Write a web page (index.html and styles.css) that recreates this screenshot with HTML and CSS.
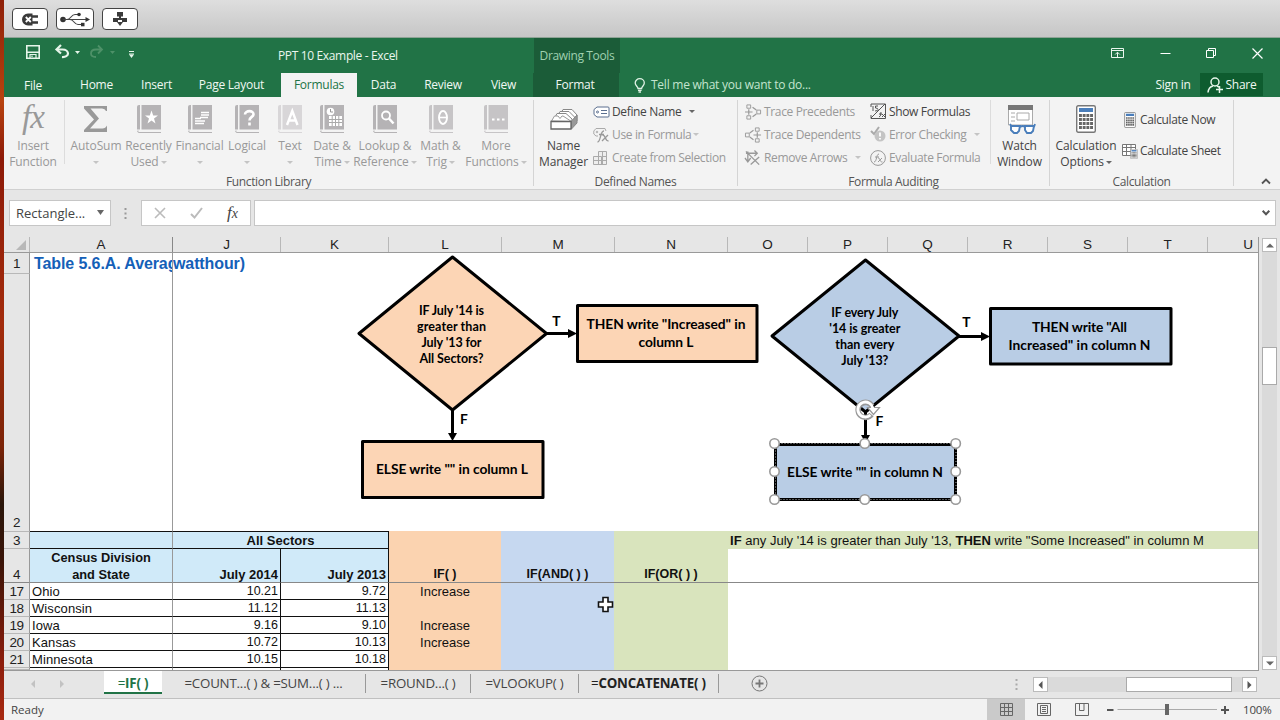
FILE: index.html
```html
<!DOCTYPE html>
<html lang="en">
<head>
<meta charset="utf-8">
<title>PPT 10 Example - Excel</title>
<link rel="stylesheet" href="styles.css">
</head>
<body>
<svg class="defs" width="0" height="0">
  <symbol id="book" viewBox="0 0 24 28"><path d="M0 2Q0 0 2 0H3V24.500H0Z" fill="currentColor"/><path d="M4.500 0H24V24.500H4.500Z" fill="currentColor"/><path d="M1 25.500Q0 27.500 2 27.500H24" fill="none" stroke="currentColor"/></symbol>
  <symbol id="calc" viewBox="0 0 20 28"><rect x=".7" y=".7" width="18.600" height="26.600" rx="1.500" fill="#fff" stroke="#777" stroke-width="1.400"/><rect x="3" y="3" width="14" height="4" fill="#4a7ebb"/><path d="M3 10.500h14M3 14.500h14M3 18.500h14M3 22.500h14" stroke="#666" stroke-width="3" stroke-dasharray="2.900 .8"/></symbol>
</svg>
<div class="desktop">
<div class="wallpaper"></div>
<div class="screen">

<div class="devices">
  <span class="device"><svg width="16" height="13" viewBox="0 0 16 13"><path d="M10.500 .5V12.500H6A6 6 0 0 1 6 .5Z" fill="#3a3a3a"/><path d="M10 3.500H16M10 9.500H16" stroke="#3a3a3a" stroke-width="2.400"/><path d="M3.800 4L8.800 9M8.800 4L3.800 9" stroke="#fff" stroke-width="1.800"/></svg></span>
  <span class="device"><svg width="30" height="15" viewBox="0 0 30 15"><circle cx="3" cy="7.500" r="2.800" fill="#333"/><path d="M3 7.500H26M7 7.500C11 7.500 11 2.500 15 2.500H18M10 7.500C14 7.500 14 12.500 18 12.500H22" fill="none" stroke="#444" stroke-width="1.200"/><path d="M25.500 5L30 7.500L25.500 10Z" fill="#333"/><circle cx="19" cy="2.500" r="1.800" fill="#333"/><rect x="21" y="10.800" width="3.500" height="3.500" fill="#333"/></svg></span>
  <span class="device"><svg width="16" height="14" viewBox="0 0 16 14"><path d="M5 0H11V4.500H9V6H15V10H10V8H6V10H1V6H7V4.500H5ZM5 10H11L8 14Z" fill="#3a3a3a"/></svg></span>
</div>

<div class="titlebar">
  <div class="quick">
    <svg width="120" height="22" viewBox="0 0 120 22" fill="none" stroke="#e6f5ea">
      <path d="M.8 3.800H13.200V16.200H.8ZM1 10.200H13" stroke-width="1.600"/><path d="M4 16V12.500H10V16M6 13.500V15" stroke-width="1.200"/>
      <path d="M31 7.500H36.500C40 7.500 42 9.500 42 11.500S39.500 15.300 36 15" stroke-width="2.200"/><path d="M35 3L30.500 7.500L35 11.500" stroke-width="2.200"/><path d="M49 9H54L51.500 12Z" fill="#e6f5ea" stroke="none"/>
      <g stroke="#4e9168"><path d="M75 7.500H70C66.500 7.500 65 9.500 65 11.500S67 15 70 15M72 3.500L76 7.500L72 11.500" stroke-width="1.800"/></g><path d="M84 9H89L86.500 12Z" fill="#4e9168" stroke="none"/>
      <path d="M103 9.500H108M103 12H108" stroke-width="1"/><path d="M103 12.500H108L105.500 16Z" fill="#e6f5ea" stroke="none"/>
    </svg>
  </div>
  <div class="wintitle">PPT 10 Example - Excel</div>
  <div class="ctx-title">Drawing Tools</div>
  <div class="winctl">
    <svg width="14" height="12" viewBox="0 0 14 12" fill="none" stroke="#eaf6ee"><path d="M.5 1.500H12.500V10.500H.5ZM.5 3.500H12.500M6.500 10V5.500M4.200 7.500L6.500 5.200L8.800 7.500"/></svg>
    <svg width="11" height="12" viewBox="0 0 11 12" stroke="#fff"><path d="M.5 6.500H10.500"/></svg>
    <svg width="11" height="11" viewBox="0 0 11 11" fill="none" stroke="#fff"><path d="M.5 2.500H7.500V9.500H.5ZM2.500 2.500V.5H9.500V7.500H7.500"/></svg>
    <svg width="11" height="11" viewBox="0 0 11 11" stroke="#fff" stroke-width="1.200"><path d="M.5.5L10.500 10.500M10.500.5L.5 10.500"/></svg>
  </div>
</div>

<div class="tabs">
  <span class="t-file">File</span><span class="t-home">Home</span><span class="t-insert">Insert</span><span class="t-page">Page Layout</span><span class="t-form active">Formulas</span><span class="t-data">Data</span><span class="t-rev">Review</span><span class="t-view">View</span><span class="t-fmt">Format</span>
  <span class="tell"><svg width="12" height="15" viewBox="0 0 12 15" fill="none" stroke="#e0f2e5" stroke-width="1.300"><path d="M4 10.500C4 8.500 1.200 7.800 1.200 5A4.500 4.300 0 0 1 10.300 5C10.300 7.800 7.600 8.500 7.600 10.500ZM4 12.300H7.600M4.500 14H7"/></svg>Tell me what you want to do...</span>
  <span class="signin">Sign in</span>
  <span class="share"><svg width="17" height="16" viewBox="0 0 17 16" fill="none" stroke="#e6f5ea" stroke-width="1.500"><circle cx="8" cy="5" r="4"/><path d="M1 15.500C1.500 11.500 3.500 9.500 6 9M10 9L12 10M9 12.500H16M12.500 9V16"/></svg>Share</span>
</div>

<div class="ribbon">
  <section class="group g-lib">
    <div class="tools">
      <div class="big off w58"><span class="pic fx">fx</span><span>Insert</span><span>Function</span></div>
      <i class="vline first"></i>
      <div class="big off w56"><span class="pic"><svg width="24" height="28" viewBox="0 0 24 28"><path d="M0 1H23V6H22Q21 3.500 18 3.500H6.500L15 13.500L6 23.500H18.500Q21.500 23.500 23 20.500V27H0V25L10 14.500L0 3.500Z" fill="#999"/></svg></span><span>AutoSum</span><span class="arr"></span></div>
      <div class="big off w49"><span class="pic"><svg width="24" height="28"><use href="#book"/><path d="M14.500 5.500L16.200 10.500H21L17 13.600L18.500 18.500L14.500 15.500L10.500 18.500L12 13.600L8 10.500H12.800Z" fill="#fff"/></svg></span><span>Recently</span><span>Used <i class="arr in"></i></span></div>
      <div class="big off w53"><span class="pic"><svg width="24" height="28"><use href="#book"/><path d="M13 7.500H21M13 10H21M12 12.500H20M7 13.500H13M7 16H17M7 18.500H16" stroke="#fff" stroke-width="1.600"/></svg></span><span>Financial</span><span class="arr"></span></div>
      <div class="big off w42"><span class="pic"><svg width="24" height="28"><use href="#book"/><path d="M10 9.500C10 5 19 5 18.500 9.500C18.200 12 14.500 12 14.500 15.500M14.500 17.500V20.500" fill="none" stroke="#fff" stroke-width="2.600"/></svg></span><span>Logical</span><span class="arr"></span></div>
      <div class="big off w44"><span class="pic pale"><svg width="24" height="28"><use href="#book"/><path d="M9 20L14.300 6L19.500 20M11 15.500H17.500" fill="none" stroke="#fff" stroke-width="2.400"/></svg></span><span>Text</span><span class="arr"></span></div>
      <div class="big off w40"><span class="pic"><svg width="24" height="28"><use href="#book"/><circle cx="10.500" cy="6.500" r="3.800" fill="#fff"/><path d="M10.500 4V7H13" stroke="#999" fill="none"/><path d="M9 11H22V21H9Z" fill="#fff"/><path d="M9 14.500H22M9 17.500H22M12.200 11V21M15.500 11V21M18.800 11V21" stroke="#aaa"/></svg></span><span>Date &amp;</span><span>Time <i class="arr in"></i></span></div>
      <div class="big off w66"><span class="pic"><svg width="24" height="28"><use href="#book"/><circle cx="13" cy="10.500" r="4" fill="none" stroke="#fff" stroke-width="1.800"/><path d="M16 13.500L20.500 18.500" stroke="#fff" stroke-width="2.500"/></svg></span><span>Lookup &amp;</span><span>Reference <i class="arr in"></i></span></div>
      <div class="big off w45"><span class="pic mid"><svg width="24" height="28"><use href="#book"/><ellipse cx="14" cy="12.500" rx="4" ry="6.500" fill="none" stroke="#fff" stroke-width="1.900"/><path d="M11 12.500H17" stroke="#fff" stroke-width="1.600"/></svg></span><span>Math &amp;</span><span>Trig <i class="arr in"></i></span></div>
      <div class="big off w66"><span class="pic mid"><svg width="24" height="28"><use href="#book"/><path d="M8 14.500H21" stroke="#fff" stroke-width="2.200" stroke-dasharray="2.500 2.500"/></svg></span><span>More</span><span>Functions <i class="arr in"></i></span></div>
    </div>
    <div class="cap">Function Library</div>
  </section>

  <section class="group g-names">
    <div class="tools">
      <div class="big w59"><span class="pic"><svg width="28" height="28" viewBox="0 0 28 28" fill="#fff" stroke="#888"><path d="M9 12L13 4.500H22L27 10V16L22 20Z"/><path d="M6 13L10 6.500H19L24.500 12V18L21 20Z"/><path d="M3 16L7 8.500H16L22 14V20Z"/><path d="M1.500 16L4.500 11H8L10 13.500L12 11H13L21.500 16.500Z" stroke="#999"/><path d="M21.500 16L27 10V18L21.500 24Z" fill="#999"/><path d="M1 16.500H21V24H1Z" stroke="#666" stroke-width="1.300"/></svg></span><span>Name</span><span>Manager</span></div>
      <div class="small">
        <div class="row"><svg width="17" height="16" viewBox="0 0 17 16" fill="#fff" stroke="#5b6f8f"><path d="M4 3H15Q16 3 16 4V12Q16 13 15 13H4L1 10.500V5.500Z"/><circle cx="4.500" cy="8" r="1"/><path d="M8 6.500H14M8 9.500H14"/></svg><span>Define Name</span><i class="arr dk gap"></i></div>
        <div class="row off"><svg width="17" height="16" viewBox="0 0 17 16" fill="none" stroke="#aaa"><path d="M9 1.500H12L13 4M9 1.500H3L.8 4V7L3 9H5"/><circle cx="4" cy="5" r=".8"/><path d="M4.500 15C8 15 7 3.500 11 4M6 7.500H11M9.500 8C13 8 11.500 14 15.500 14M15 8L9 14" stroke="#999" stroke-width="1.300"/></svg><span>Use in Formula</span><i class="arr"></i></div>
        <div class="row off"><svg width="17" height="16" viewBox="0 0 17 16" fill="#eee" stroke="#aaa"><path d="M5.500 1.500H13.500V14.500H5.500ZM.5 6.500H8.500V14.500H.5Z"/><path d="M.5 10.500H13.500M9.500 1.500V14.500M9.500 6.500H13.500"/></svg><span>Create from Selection</span></div>
      </div>
    </div>
    <div class="cap">Defined Names</div>
  </section>

  <section class="group g-audit">
    <div class="tools">
      <div class="small c1">
        <div class="row off"><svg width="17" height="16" viewBox="0 0 18 16" fill="none" stroke="#999"><path d="M2 .5H6V4H2ZM2 12H6V15.500H2ZM12.500 6H16.500V10H12.500Z"/><path d="M0 8H8M4 5V11M8 3L12 6M8 13L12 10" stroke-width="1.300"/></svg><span>Trace Precedents</span></div>
        <div class="row off"><svg width="17" height="16" viewBox="0 0 18 16" fill="none" stroke="#999"><path d="M11 .5H15V4H11ZM11 12H15V15.500H11ZM.5 6H4.500V10H.5Z"/><path d="M9 8H17M13 5V11M5 6L9 3M5 10L9 13" stroke-width="1.300"/></svg><span>Trace Dependents</span></div>
        <div class="row off"><svg width="17" height="16" viewBox="0 0 18 16" fill="none" stroke="#999" stroke-width="1.400"><path d="M1 1L15 15M3 1V11M1 3H13M0 8L3 12L6 8M10 0L13 3L10 6M15 7L6 15"/></svg><span>Remove Arrows</span><i class="arr gap7"></i></div>
      </div>
      <div class="small c2">
        <div class="row"><svg width="17" height="17" viewBox="0 0 17 17" fill="none" stroke="#555"><path d="M1 4V1H15.500V15.500H1V12M15 1L1 15"/><path d="M3 3V8M8 3H5.500V5Q8 5 8 6.500T5 8M9 14Q11 14 11 9M9 11H12M12 11L15 14M15 11L12 14"/></svg><span>Show Formulas</span></div>
        <div class="row off"><svg width="17" height="16" viewBox="0 0 17 16" fill="none"><path d="M1 4L4 7L9 0" stroke="#aaa" stroke-width="2"/><circle cx="10" cy="9" r="5.500" fill="#c4c4c4"/><path d="M10 5.500V9.500M10 11V12.500" stroke="#fff" stroke-width="1.800"/></svg><span>Error Checking</span><i class="arr gap7"></i></div>
        <div class="row off"><svg width="17" height="16" viewBox="0 0 17 16" fill="none" stroke="#999"><circle cx="8" cy="8" r="7.400"/><path d="M4 12C7 12 6 4 9 4M5 7H9M8 8C11 8 9 12 12.500 12M12 8L8 12"/></svg><span>Evaluate Formula</span></div>
      </div>
      <i class="vline"></i>
      <div class="big w57"><span class="pic"><svg width="30" height="30" viewBox="0 0 30 30" fill="none"><path d="M3.500 2H27.500V20H3.500Z" fill="#fff" stroke="#aaa"/><path d="M3 0H28V5H3Z" fill="#777"/><path d="M12 8H24V15H12ZM6 8H10M6 12H10M6 16H10" stroke="#aaa"/><path d="M5 19L7 22M30 19L29 22M15 22Q18 20 20 22" stroke="#4a7ebb" stroke-width="1.800"/><path d="M6 21H15L14 26L12 28H9L6 25ZM20 21H29L28 26L26 28H22L20 25Z" fill="#fff" stroke="#4a7ebb" stroke-width="1.900"/></svg></span><span>Watch</span><span>Window</span></div>
    </div>
    <div class="cap">Formula Auditing</div>
  </section>

  <section class="group g-calc">
    <div class="tools">
      <div class="big w72"><span class="pic"><svg width="20" height="28"><use href="#calc"/></svg></span><span>Calculation</span><span>Options <i class="arr in dk"></i></span></div>
      <div class="small two">
        <div class="row"><svg width="16" height="16" viewBox="0 0 16 16"><use href="#calc" x="1" y="0" width="14" height="16"/></svg><span>Calculate Now</span></div>
        <div class="row"><svg width="16" height="16" viewBox="0 0 16 16"><path d="M.5 1.500H13.500V12.500H.5ZM.5 4.500H13.500M.5 8.500H13.500M4.500 1.500V12.500M9 1.500V12.500" fill="#fff" stroke="#777"/><use href="#calc" x="8" y="6" width="8" height="10"/></svg><span>Calculate Sheet</span></div>
      </div>
    </div>
    <div class="cap">Calculation</div>
  </section>
  <div class="collapse"><svg width="10" height="7" viewBox="0 0 10 7" fill="none" stroke="#555" stroke-width="1.800"><path d="M1 5.500L5 1.500L9 5.500"/></svg></div>
</div>

<div class="fbar">
  <div class="namebox"><span>Rectangle...</span><svg width="9" height="6"><path d="M1 0H8L4.500 5Z" fill="#666"/></svg></div>
  <svg class="dots" width="3" height="14"><path d="M1.500 2V14" stroke="#999" stroke-width="2" stroke-dasharray="2 2.500"/></svg>
  <div class="fbtns">
    <svg width="12" height="12" viewBox="0 0 12 12" fill="none" stroke="#bbb" stroke-width="1.600"><path d="M1 1L11 11M11 1L1 11"/></svg>
    <svg width="13" height="12" viewBox="0 0 13 12" fill="none" stroke="#bbb" stroke-width="2"><path d="M1 7L4.500 10.500L12 1"/></svg>
    <span class="fx2">f<small>x</small></span>
  </div>
  <div class="finput"><svg width="8" height="6" viewBox="0 0 8 6" fill="none" stroke="#555" stroke-width="2"><path d="M.7.8L4 4.300L7.300.8"/></svg></div>
</div>

<div class="work">
  <div class="sheet">
    <div class="heads"><span class="corner"><svg width="10" height="10"><path d="M10 0V10H0Z" fill="#b8b8b8"/></svg></span><span class="cA">A</span><span class="cJ">J</span><span class="cJ">K</span><span class="cL">L</span><span class="cM">M</span><span class="cN">N</span><span class="cO">O</span><span class="cO">P</span><span class="cO">Q</span><span class="cO">R</span><span class="cO">S</span><span class="cO">T</span><span class="cU">U</span></div>
    <div class="r r1"><b class="rh">1</b><span class="cA">Table 5.6.A. Averag</span><span class="rest">watthour)</span></div>
    <div class="r r2"><b class="rh">2</b><span class="cA"></span><span class="cJK"></span><span class="cL"></span><span class="cM"></span><span class="cN"></span><span class="rest"></span></div>
    <div class="r r3"><b class="rh">3</b><span class="cA"></span><span class="cJK">All Sectors</span><span class="cL"></span><span class="cM"></span><span class="cN"></span><span class="rest"><b>IF</b> any July '14 is greater than July '13, <b>THEN</b> write "Some Increased" in column M</span></div>
    <div class="r r4"><b class="rh">4</b><span class="cA">Census Division<br>and State</span><span class="cJ">July 2014</span><span class="cJ">July 2013</span><span class="cL">IF( )</span><span class="cM">IF(AND( ) )</span><span class="cN">IF(OR( ) )</span><span class="rest"></span></div>
    <div class="r d"><b class="rh">17</b><span class="cA">Ohio</span><span class="cJ">10.21</span><span class="cJ">9.72</span><span class="cL">Increase</span><span class="cM"></span><span class="cN"></span></div>
    <div class="r d"><b class="rh">18</b><span class="cA">Wisconsin</span><span class="cJ">11.12</span><span class="cJ">11.13</span><span class="cL"></span><span class="cM"></span><span class="cN"></span></div>
    <div class="r d"><b class="rh">19</b><span class="cA">Iowa</span><span class="cJ">9.16</span><span class="cJ">9.10</span><span class="cL">Increase</span><span class="cM"></span><span class="cN"></span></div>
    <div class="r d"><b class="rh">20</b><span class="cA">Kansas</span><span class="cJ">10.72</span><span class="cJ">10.13</span><span class="cL">Increase</span><span class="cM"></span><span class="cN"></span></div>
    <div class="r d"><b class="rh">21</b><span class="cA">Minnesota</span><span class="cJ">10.15</span><span class="cJ">10.18</span><span class="cL"></span><span class="cM"></span><span class="cN"></span></div>
    <div class="r last"><b class="rh"></b><span class="cA"></span><span class="cJ"></span><span class="cJ"></span><span class="cL"></span><span class="cM"></span><span class="cN"></span></div>

    <svg class="chart" width="860" height="380" viewBox="350 250 860 380">
      <g class="orange">
        <path d="M452.500 257L546.500 333.500L452.500 410L359 333.500Z"/>
        <rect x="577.500" y="305.500" width="179.500" height="56"/>
        <rect x="362.500" y="441.500" width="180.500" height="56"/>
      </g>
      <g class="blue">
        <path d="M865.500 260L959 336L865.500 412L772 336Z"/>
        <rect x="990.500" y="308.500" width="180.500" height="55.500"/>
        <rect x="775.500" y="444.500" width="180" height="55"/>
      </g>
      <path class="wire" d="M546 333.500H570M452.500 410V434M959 336.500H983M865.500 412V436"/>
      <path d="M568 329L577 333.500L568 338ZM448 433H457L452.500 441ZM981 332L990 336.500L981 341ZM861 435H870L865.500 443Z"/>
      <g class="dia">
        <text x="451.500" y="314.500" textLength="65">IF July '14 is</text><text x="451.500" y="330.500" textLength="69">greater than</text><text x="451.500" y="346.500" textLength="60">July '13 for</text><text x="451.500" y="363" textLength="64">All Sectors?</text>
        <text x="864.800" y="316.500" textLength="67">IF every July</text><text x="864.800" y="332.500" textLength="71">'14 is greater</text><text x="864.800" y="348.500" textLength="59">than every</text><text x="864.800" y="365" textLength="47">July '13?</text>
      </g>
      <g class="box">
        <text x="666" y="329" textLength="159">THEN write "Increased" in</text><text x="666" y="347" textLength="55">column L</text>
        <text x="452" y="474" textLength="152">ELSE write "" in column L</text>
        <text x="1079.500" y="332" textLength="95">THEN write "All</text><text x="1079.500" y="350" textLength="142">Increased" in column N</text>
        <text x="865" y="477" textLength="156">ELSE write "" in column N</text>
        <text x="556.500" y="326">T</text><text x="464" y="424">F</text><text x="966.500" y="327">T</text><text x="879.300" y="426">F</text>
      </g>
      <path class="dots-sel" d="M775.500 443.500H956V499.500H775.500Z"/>
      <g class="handles"><circle cx="774.500" cy="443.500" r="4.700"/><circle cx="864.800" cy="443.500" r="4.700"/><circle cx="955.700" cy="443.500" r="4.700"/><circle cx="774.500" cy="471.500" r="4.700"/><circle cx="955.700" cy="471.500" r="4.700"/><circle cx="774.500" cy="499.500" r="4.700"/><circle cx="864.800" cy="499.500" r="4.700"/><circle cx="955.700" cy="499.500" r="4.700"/></g>
      <g fill="none"><path d="M872 406A7.500 7.500 0 1 0 871.500 414.500" stroke="#999" stroke-width="5.500"/><path d="M867.500 407.500H879.500L873.500 414.500Z" fill="#fff" stroke="#999" stroke-width="1.200"/><path d="M872.800 408.500A7.500 7.500 0 1 0 870.500 415" stroke="#fff" stroke-width="2.800"/></g>
      <path d="M603 597.500H608V602H612.500V607H608V611.500H603V607H598.500V602H603Z" fill="#fff" stroke="#111" stroke-width="1.600"/>
    </svg>
  </div>
  <div class="vscroll"><span class="sb"><svg width="8" height="5"><path d="M0 4.500H8L4 .5Z" fill="#666"/></svg></span><span class="vthumb"></span><span class="sb"><svg width="8" height="5"><path d="M0 .5H8L4 4.500Z" fill="#666"/></svg></span></div>
</div>

<div class="stabs">
  <span class="nav"><svg width="60" height="10"><path d="M31 1V9L27 5ZM56 1V9L60 5Z" fill="#c2c2c2" transform="translate(-26 0)"/></svg></span>
  <span class="st1 on">=<b>IF( )</b></span><span class="st2">=COUNT...( ) &amp; =SUM...( ) ...</span><span class="st3">=ROUND...( )</span><span class="st4">=VLOOKUP( )</span><span class="st5">=<b>CONCATENATE( )</b></span>
  <svg class="add" width="17" height="17" fill="none" stroke="#777"><circle cx="8.500" cy="8.500" r="7.500"/><path d="M4.500 8.500H12.500M8.500 4.500V12.500" stroke-width="1.800"/></svg>
  <svg class="dots hd" width="3" height="13"><path d="M1.500 1V13" stroke="#aaa" stroke-width="2" stroke-dasharray="2 2.500"/></svg>
  <span class="hscroll"><span class="sb"><svg width="5" height="8"><path d="M4.500 0V8L.5 4Z" fill="#555"/></svg></span><span class="track"><span class="hthumb"></span></span><span class="sb"><svg width="5" height="8"><path d="M.5 0V8L4.500 4Z" fill="#555"/></svg></span></span>
</div>

<div class="status">
  <span class="ready">Ready</span>
  <span class="vw sel"><svg width="13" height="13" fill="none" stroke="#666"><path d="M.5.5H12.500V12.500H.5ZM.5 4.500H12.500M.5 8.500H12.500M4.500.5V12.500M8.500.5V12.500"/></svg></span>
  <span class="vw"><svg width="14" height="13" fill="none" stroke="#666"><path d="M.5.500H13.500V12.500H.5ZM3.500 2.500H10.500V10.500H3.500ZM5 4.500H9M5 6.500H9M5 8.500H9"/></svg></span>
  <span class="vw"><svg width="14" height="13" fill="none" stroke="#666"><path d="M.5.5H13.500V12.500H.5ZM4.500.5V7.500H9V.5"/></svg></span>
  <svg class="zoom" width="122" height="13" viewBox="0 0 122 13"><path d="M0 7H6.500M114 7H122M118 3V11" stroke="#555" stroke-width="2"/><path d="M10.500 6.500H110" stroke="#aaa"/><rect x="58" y="1" width="4" height="11" fill="#666"/></svg>
  <span class="pct">100%</span>
</div>

</div>
</div>
</body>
</html>
```

FILE: styles.css
```css
* { box-sizing: border-box; }
body { margin: 0; width: 1280px; height: 720px; overflow: hidden; font-family: "Open Sans", sans-serif; font-size: 12px; color: #444; }
svg { display: block; flex: none; overflow: visible; }
.defs { position: absolute; }
.desktop { display: flex; height: 720px; }
.wallpaper { width: 4px; background: linear-gradient(#8e1f08, #b8430f 14%, #8d1a08 22%, #a32c0c 45%, #7c2408 62%, #2a160a 70%, #3a1408 78%, #8c1d0c 92%, #a82a12); }
.screen { width: 1276px; display: flex; flex-direction: column; }
.screen > * { flex: none; }

.devices { height: 38px; background: linear-gradient(#dedede, #c6c6c6); border-bottom: 1px solid #8fa396; display: flex; gap: 8px; padding: 8px 0 0 8px; }
.device { width: 36px; height: 22px; border: 1px solid #444; border-radius: 4px; background: #fff; display: flex; align-items: center; justify-content: center; }
.device:nth-child(2) { width: 38px; }

.titlebar { height: 35px; background: #217346; color: #eaf6ee; display: flex; }
.quick { width: 232px; padding: 4px 0 0 22px; }
.wintitle { width: 298px; padding-left: 42px; line-height: 35px; letter-spacing: -.35px; }
.ctx-title { width: 86px; background: #1b5c38; color: #9fd0b0; text-align: center; line-height: 35px; letter-spacing: -.35px; }
.winctl { flex: 1; display: flex; justify-content: flex-end; gap: 35px; align-items: center; padding: 0 17px 5px 0; }

.tabs { height: 24px; background: #217346; color: #f0f8f2; display: flex; line-height: 24px; text-align: center; letter-spacing: -.25px; }
.tabs > span { flex: none; }
.t-file { width: 58px; padding-top: 1px; } .t-home { width: 69px; } .t-insert { width: 51px; } .t-page { width: 99px; }
.t-form { width: 76px; } .t-data { width: 53px; } .t-rev { width: 66px; } .t-view { width: 55px; margin-right: 2px; }
.t-fmt { width: 86px; background: #1b5c38; padding-right: 2px; }
.tabs .t-view { margin-right: 2px; }
.active { background: #f3f3f3; color: #217346; }
.tell { display: flex; width: 530px; padding-left: 15px; gap: 5px; align-items: center; color: #c4e5cf; }
.signin { width: 48px; }
.share { width: 63px; height: 23px; margin-left: 3px; background: #0e5c2f; display: flex; gap: 2px; align-items: center; justify-content: center; }

.ribbon { height: 93px; background: #f3f3f3; border-bottom: 1px solid #d0d0d0; display: flex; padding-top: 3px; }
.group { height: 86px; border-right: 1px solid #d4d4d4; display: flex; flex-direction: column; }
.tools { height: 73px; display: flex; flex: none; }
.cap { text-align: center; line-height: 17px; color: #555; letter-spacing: -.35px; flex: none; }
.g-lib { width: 530px; } .g-names { width: 204px; } .g-audit { width: 312px; } .g-calc { width: 184px; }
.big { display: flex; flex-direction: column; align-items: center; line-height: 16px; white-space: nowrap; letter-spacing: -.1px; flex: none; }
.pic { height: 33px; margin-bottom: 5px; padding-top: 5px; color: #b5b3b5; }
.mid { color: #c6c4c6; } .pale { color: #d8d6d8; }
.off { color: #999; }
.fx { font: italic 33px/26px "Liberation Serif", serif; color: #999; letter-spacing: -1px; padding-top: 4px; }
.w58 { width: 58px; } .w56 { width: 56px; margin-left: 3px; } .w49 { width: 49px; } .w53 { width: 53px; } .w42 { width: 42px; } .w44 { width: 44px; } .w40 { width: 40px; } .w66 { width: 66px; } .w45 { width: 45px; } .w59 { width: 59px; } .w57 { width: 57px; } .w72 { width: 72px; }
.arr { width: 0; height: 0; border: 3px solid transparent; border-top-color: #c4c4c4; border-bottom: 0; margin-top: 7px; align-self: center; }
.arr.in { display: inline-block; margin: 0 0 2px -1px; }
.arr.dk { border-top-color: #666; }
.row .arr { margin: 0; }
.row .arr.gap, .row .arr.gap7 { margin-left: 6px; }
.vline { width: 1px; height: 64px; background: #dcdcdc; flex: none; }
.vline.first { margin-left: 2px; }
.small { display: flex; flex-direction: column; white-space: nowrap; letter-spacing: -.35px; }
.row { height: 23px; display: flex; gap: 2px; align-items: center; }
.c1 { padding-left: 7px; width: 132px; } .c2 { width: 120px; }
.two { padding: 8px 0 0; gap: 8px; }
.collapse { margin: 78px 0 0 27px; }

.fbar { height: 47px; background: #e6e6e6; display: flex; padding: 10px 4px 0 5px; }
.namebox { width: 102px; height: 26px; background: #fff; border: 1px solid #c6c6c6; display: flex; align-items: center; justify-content: space-between; padding: 0 5px 0 6px; font-size: 13px; }
.dots { margin: 6px 14px 0 13px; }
.fbtns { width: 110px; height: 26px; background: #fff; border: 1px solid #c6c6c6; display: flex; align-items: center; padding-left: 12px; gap: 24px; }
.fx2 { font: italic 17px/20px "Liberation Serif", serif; color: #444; }
.fx2 small { font-size: 14px; }
.finput { flex: 1; margin-left: 3px; height: 26px; background: #fff; border: 1px solid #c6c6c6; display: flex; justify-content: flex-end; align-items: center; padding-right: 5px; }

.work { height: 434px; display: flex; background: #e6e6e6; }
.sheet { position: relative; width: 1255px; height: 434px; overflow: hidden; font: 13px/17px "Liberation Sans", sans-serif; color: #111; border-right: 1px solid #999; }
.heads { display: flex; height: 16px; background: #e6e6e6; border-bottom: 1px solid #999; font-size: 13.500px; line-height: 15px; text-align: center; color: #222; }
.heads span { border-right: 1px solid #b8b8b8; flex: none; }
.heads .corner { width: 26px; display: flex; padding: 3px 0 0 12px; }
.heads .cA { border-color: #888; }
.cA { width: 143px; } .cJ { width: 108px; } .cJK { width: 216px; } .cL { width: 112px; } .cM { width: 113px; } .cN { width: 114px; } .rest { flex: 1; }
.heads .cL, .heads .cM, .heads .cN { width: 113px; } .heads .cO { width: 80px; }
.heads .cU { width: 80px; border: 0; }
.r { display: flex; height: 17px; background: #fff; }
.r > * { flex: none; white-space: nowrap; }
.r > .rest { flex: 1; }
.rh { width: 26px; background: #e6e6e6; border-right: 1px solid #999; border-bottom: 1px solid #b8b8b8; font-weight: normal; font-size: 13.500px; letter-spacing: -.5px; text-align: center; color: #222; line-height: 17px; }
.r .cA { border-right: 1px solid #999; }
.r1 { height: 21px; font-weight: bold; font-size: 16px; line-height: 21px; color: #1460b8; letter-spacing: -.1px; }
.r1 .rh { line-height: 22px; }
.r1 .cA { padding-left: 4px; overflow: hidden; }
.r2 { height: 258px; }
.r2 .rh { padding-top: 240px; }
.r2 > span { border-bottom: 1px solid #111; }
.r2 .cL { border-color: #fbd3b0; } .r2 .cM { border-color: #c6d8f0; } .r2 .cN, .r2 .rest { border-color: #d9e4bd; }
.r3 .cA, .r3 .cJK, .r4 .cA, .r4 .cJ { background: #d0eaf9; font-weight: bold; border-bottom: 1px solid #111; }
.r3 .cJK { text-align: center; border-right: 1px solid #111; }
.r3 .rest { background: #d9e4bd; padding-left: 2px; letter-spacing: .02px; }
.r4 { height: 34px; }
.r4 > * { border-bottom: 1px solid #888 !important; }
.r4 .rh, .r4 .cJ, .r4 .cL, .r4 .cM, .r4 .cN { padding-top: 17px; font-weight: bold; }
.r4 .cL, .r4 .cM, .r4 .cN { font-size: 12.500px; }
.r4 .rh { font-weight: normal; }
.r4 .cA { text-align: center; font-size: 12.800px; }
.r .cJ { text-align: right; border-right: 1px solid #111; padding-right: 2px; }
.d .cJ { font-size: 12.500px; }
.d .cA, .d .cJ { border-bottom: 1px solid #111; padding-left: 2px; }
.d .cA { letter-spacing: .1px; }
.r3 .cL, .r4 .cL, .d .cL, .last .cL { background: #fbd3b0; text-align: center; }
.r3 .cM, .r4 .cM, .d .cM, .last .cM { background: #c6d8f0; text-align: center; }
.r3 .cN, .r4 .cN, .d .cN, .last .cN { background: #d9e4bd; text-align: center; }
.last { height: 3px; border-bottom: 1px solid #999; }
.chart { position: absolute; left: 346px; top: 13px; font-family: Lato, sans-serif; font-weight: bold; text-anchor: middle; fill: #000; }
.orange { fill: #fcd5b5; } .blue { fill: #b9cde5; }
.orange > *, .blue > * { stroke: #000; stroke-width: 3; stroke-linejoin: round; }
.wire { stroke: #000; stroke-width: 3; fill: none; }
.dia { font-size: 12.500px; } .box { font-size: 13.800px; }
.dots-sel { fill: none; stroke: #aaa; stroke-width: 1; stroke-dasharray: 1 2; }
.handles { fill: #fff; stroke: #999; stroke-width: 1.600; }
.vscroll { width: 15px; margin: 1px 0 0 3px; height: 432px; background: #dadada; display: flex; flex-direction: column; justify-content: space-between; }
.sb { width: 15px; height: 14px; background: #fff; border: 1px solid #bbb; display: flex; align-items: center; justify-content: center; flex: none; }
.vthumb { height: 38px; background: #fff; border: 1px solid #aaa; margin-bottom: 177px; }

.stabs { height: 28px; background: #e6e6e6; border-bottom: 1px solid #c0c0c0; display: flex; font-size: 13.300px; line-height: 24px; letter-spacing: -.2px; }
.stabs > span { flex: none; text-align: center; white-space: nowrap; }
.nav { width: 100px; padding: 8px 0 0 26px; }
.st1 { width: 58px; } .st2 { width: 204px; } .st3 { width: 105px; } .st4 { width: 108px; } .st5 { width: 140px; color: #222; }
.on { background: #fff; color: #217346; height: 23px; border-bottom: 2px solid #217346; }
.st2, .st3, .st4, .st5 { height: 19px; margin-top: 3px; line-height: 18px; border-right: 1px solid #999; }
.add { margin: 4px 0 0 32px; }
.hd { margin: 7px 0 0 247px; }
.hscroll { display: flex; height: 14px; margin: 6px 0 0 15px; }
.hscroll .sb { width: 15px; height: 15px; }
.track { width: 194px; height: 15px; background: #dadada; padding-left: 78px; }
.hthumb { display: block; width: 106px; height: 15px; background: #fff; border: 1px solid #aaa; }

.status { height: 21px; background: #f2f2f2; display: flex; line-height: 20px; align-items: center; }
.ready { width: 983px; padding-left: 7px; font-size: 11.500px; }
.vw { width: 38px; height: 21px; display: flex; align-items: center; justify-content: center; }
.sel { background: #cacaca; }
.zoom { margin-left: 6px; }
.pct { margin-left: 14px; font-size: 11.500px; letter-spacing: -.2px; }
```
